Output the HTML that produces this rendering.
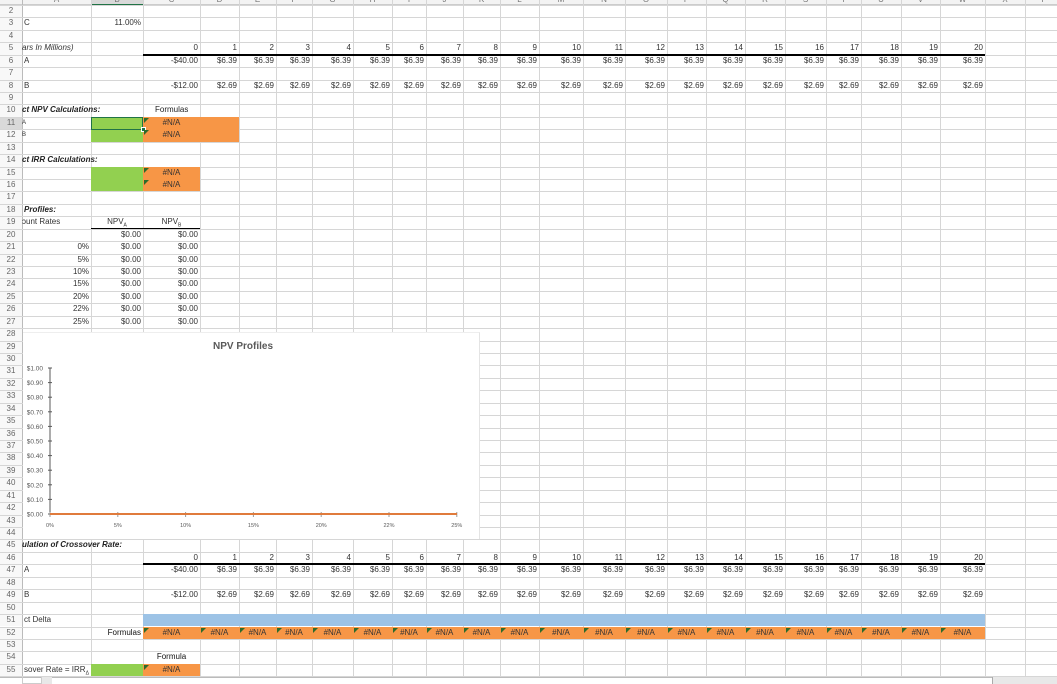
<!DOCTYPE html>
<html><head><meta charset="utf-8">
<style>
html,body{margin:0;padding:0;background:#fff;}
body{width:1057px;height:684px;overflow:hidden;position:relative;font-family:"Liberation Sans",Arial,sans-serif;font-size:8px;color:#333;}
.a{position:absolute;box-sizing:border-box;}
.t{position:absolute;white-space:nowrap;line-height:12px;overflow:hidden;}
.vl{position:absolute;width:1px;background:#d6d6d6;}
.hl{position:absolute;height:1px;background:#d6d6d6;}
.tri{position:absolute;width:0;height:0;border-top:5px solid #2e6b2a;border-right:5px solid transparent;}
.rn{position:absolute;left:0;width:22px;text-align:center;color:#666;font-size:8px;line-height:12px;background:#f8f8f8;}
</style></head><body>
<div id="root"></div>
<script>
(function(){
const cols=[22,91,143,200,239,276,312,353,392,426,463,500,539,583,625,667,706,745,785,826,861,901,940,985,1025,1060];
const letters="ABCDEFGHIJKLMNOPQRSTUVWXY";
const RH=12.43;
function rt(r){return 5+(r-2)*RH;}
let h='';
h+=`<div class="a" style="left:0;top:0;width:1057px;height:5px;background:#f3f3f3;border-bottom:1px solid #ccc"></div>`;
h+=`<div class="a" style="left:91px;top:0;width:52px;height:5px;background:#d9d9d9;border-bottom:1px solid #217346"></div>`;
for(let i=0;i<25;i++){h+=`<div class="t" style="left:${cols[i]}px;top:-6px;width:${cols[i+1]-cols[i]}px;text-align:center;color:#777;font-size:8px">${letters[i]}</div>`;}
for(let r=2;r<=55;r++){let bg=r==11?'#d9d9d9':'#f8f8f8';h+=`<div class="rn" style="top:${rt(r)}px;height:${RH}px;background:${bg}">${r}</div>`;}
h+=`<div class="vl" style="left:22px;top:0;height:677px;background:#bbb"></div>`;
const G='#92d050',O='#f79646',B='#9dc3e6';
for(let i=1;i<cols.length;i++){h+=`<div class="vl" style="left:${cols[i]}px;top:0;height:677px"></div>`;}
for(let r=2;r<=56;r++){h+=`<div class="hl" style="left:0;top:${Math.round(rt(r))}px;width:1057px"></div>`;}
function box(c1,c2,r,n,color){h+=`<div class="a" style="left:${cols[c1]}px;top:${rt(r)}px;width:${cols[c2]-cols[c1]}px;height:${RH*n}px;background:${color}"></div>`;}
box(2,23,51,1,B);box(2,23,52,1,O);
box(2,4,11,2,O);box(2,3,15,2,O);
box(1,2,11,2,G);box(1,2,15,2,G);box(1,2,55,1,G);box(2,3,55,1,O);
h+=`<div class="a" style="left:${cols[1]}px;top:${rt(11)}px;width:52px;height:${RH+1}px;border:1.5px solid #217346"></div>`;
h+=`<div class="a" style="left:${cols[2]-2}px;top:${rt(12)-2}px;width:5px;height:5px;background:#217346;border:1px solid #fff"></div>`;
function tx(c,r,s,al,st){let w=cols[c+1]-cols[c];h+=`<div class="t" style="left:${cols[c]+2}px;top:${rt(r)}px;width:${w-4}px;text-align:${al||'right'};${st||''}">${s}</div>`;}
function txs(x,r,s,st){h+=`<div class="t" style="left:${x}px;top:${rt(r)}px;${st||''}">${s}</div>`;}
txs(24,3,'C');tx(1,3,'11.00%');
txs(22,5,'ars In Millions)','font-style:italic');
txs(24,6,'A');txs(24,8,'B');
function cf(r1,r2){for(let i=0;i<=20;i++){tx(2+i,r1,''+i);}tx(2,r1+1,'-$40.00');for(let i=1;i<=20;i++)tx(2+i,r1+1,'$6.39');tx(2,r2,'-$12.00');for(let i=1;i<=20;i++)tx(2+i,r2,'$2.69');
h+=`<div class="a" style="left:${cols[2]}px;top:${rt(r1+1)-1}px;width:${cols[23]-cols[2]}px;height:2px;background:#000"></div>`;}
cf(5,8);cf(46,49);
txs(22,10,'ct NPV Calculations:','font-style:italic;font-weight:bold;color:#222');
txs(155,10,'Formulas','color:#222');
txs(22,11,'A','font-size:6px');txs(22,12,'B','font-size:6px');
tx(2,11,'#N/A','center');tx(2,12,'#N/A','center');
txs(22,14,'ct IRR Calculations:','font-style:italic;font-weight:bold;color:#222');
tx(2,15,'#N/A','center');tx(2,16,'#N/A','center');
[[2,11],[2,12],[2,15],[2,16],[2,55]].forEach(function(p){h+=`<div class="tri" style="left:${cols[p[0]]+1}px;top:${rt(p[1])+1}px"></div>`;});
txs(24,18,'Profiles:','font-style:italic;font-weight:bold;color:#222');
txs(22,19,'ɔunt Rates');
tx(1,19,'NPV<sub style="font-size:5px">A</sub>','center');tx(2,19,'NPV<sub style="font-size:5px">B</sub>','center');
h+=`<div class="a" style="left:${cols[1]}px;top:${rt(20)-1}px;width:${cols[3]-cols[1]}px;height:1.5px;background:#000"></div>`;
tx(1,20,'$0.00');tx(2,20,'$0.00');
['0%','5%','10%','15%','20%','22%','25%'].forEach(function(p,i){tx(0,21+i,p);tx(1,21+i,'$0.00');tx(2,21+i,'$0.00');});
txs(22,45,'ulation of Crossover Rate:','font-style:italic;font-weight:bold;color:#222');
txs(24,47,'A');txs(24,49,'B');txs(24,51,'ct Delta');
tx(1,52,'Formulas','right','color:#111');
for(let i=0;i<21;i++){tx(2+i,52,'#N/A','center');h+=`<div class="tri" style="left:${cols[2+i]+1}px;top:${rt(52)+1}px"></div>`;}
tx(2,54,'Formula','center','color:#111');
txs(24,55,'sover Rate = IRR<sub style="font-size:5px">Δ</sub>');
tx(2,55,'#N/A','center');
h+=`<div class="a" style="left:23px;top:332px;width:457px;height:207px;background:#fff;border-right:1px solid #e4e4e4;border-top:1px solid #eee"></div>`;
let s=`<svg class="a" style="left:0;top:0" width="1057" height="684" xmlns="http://www.w3.org/2000/svg" font-family="Liberation Sans, Arial, sans-serif">`;
s+=`<text x="243" y="349" text-anchor="middle" font-size="10" font-weight="bold" fill="#595959">NPV Profiles</text>`;
s+=`<line x1="50" y1="368" x2="50" y2="515" stroke="#595959" stroke-width="1"/>`;
for(let i=0;i<=10;i++){let y=514-i*14.6;s+=`<line x1="48" y1="${y}" x2="52" y2="${y}" stroke="#595959"/><text x="43" y="${y+2.5}" text-anchor="end" font-size="6.5" fill="#595959">$${(i/10).toFixed(2)}</text>`;}
const xl=['0%','5%','10%','15%','20%','22%','25%'];
for(let i=0;i<7;i++){let x=50+i*67.8;s+=`<line x1="${x}" y1="512" x2="${x}" y2="517" stroke="#999"/><text x="${x}" y="527" text-anchor="middle" font-size="5.5" fill="#595959">${xl[i]}</text>`;}
s+=`<line x1="50" y1="514" x2="457" y2="514" stroke="#e07b3c" stroke-width="2"/>`;
s+=`</svg>`;
h+=s;
h+=`<div class="a" style="left:0;top:677px;width:1057px;height:7px;background:#fff;border-top:1px solid #bbb"></div>`;
h+=`<div class="a" style="left:22px;top:677px;width:20px;height:7px;border:1px solid #ccc;border-top:none"></div>`;
h+=`<div class="a" style="left:42px;top:677px;width:10px;height:7px;background:#e8e8e8"></div>`;
h+=`<div class="a" style="left:992px;top:677px;width:65px;height:7px;background:#e8e8e8;border-left:1px solid #aaa"></div>`;
document.getElementById('root').innerHTML=h;
})();
</script>
</body></html>
